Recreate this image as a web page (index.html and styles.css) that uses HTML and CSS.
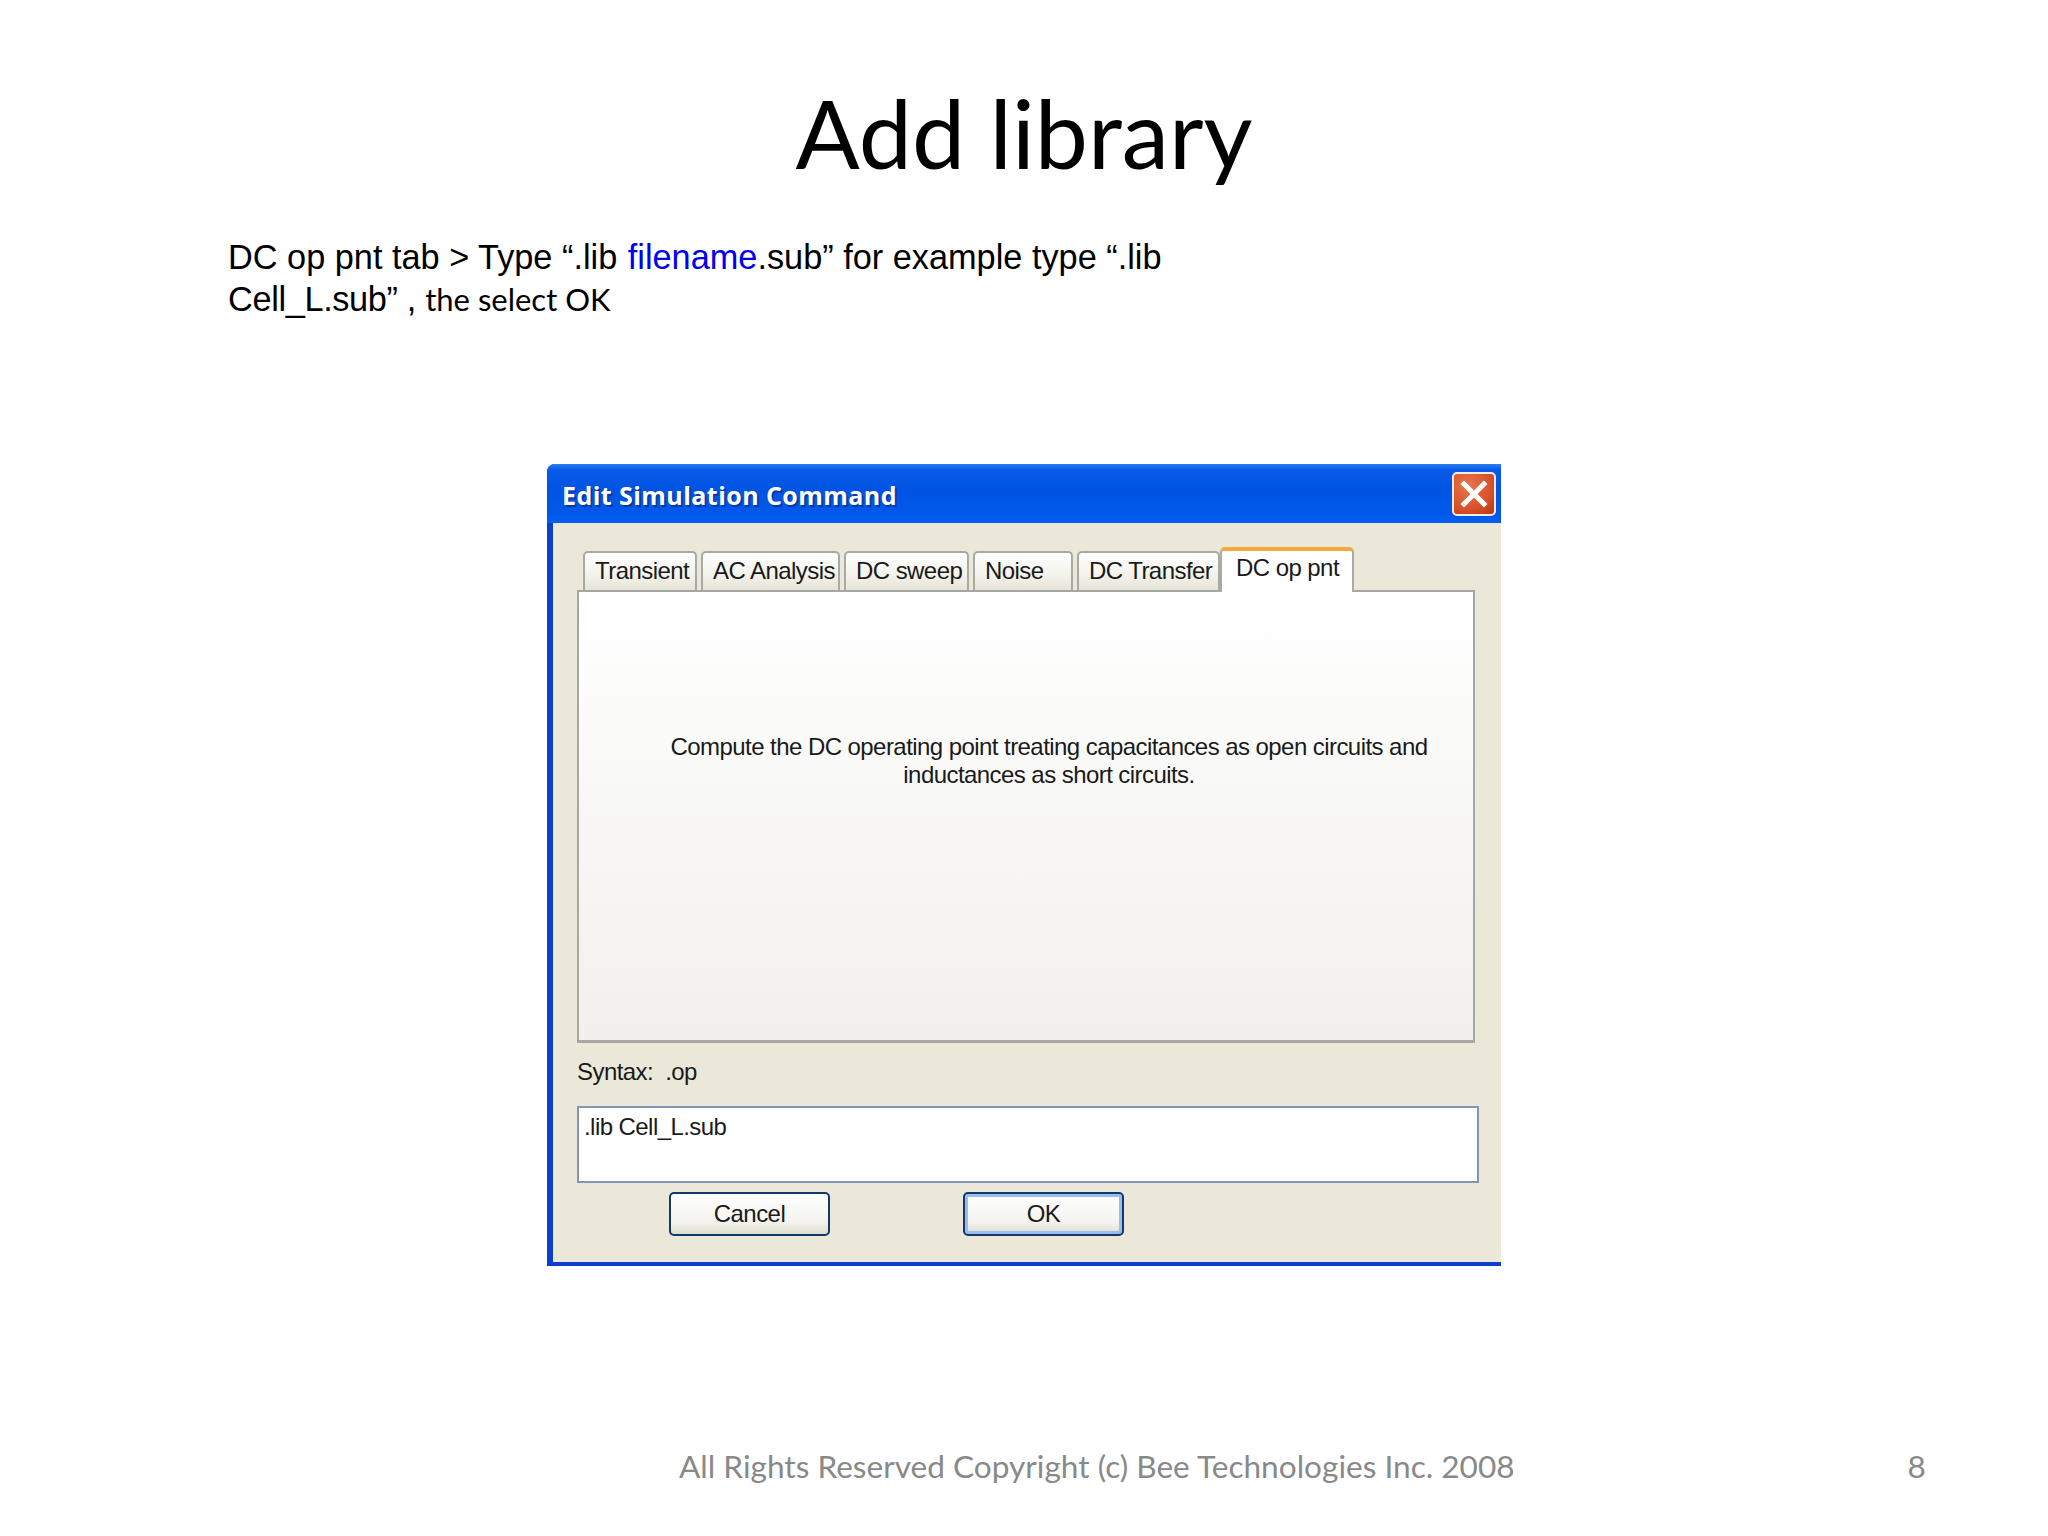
FILE: index.html
```html
<!DOCTYPE html>
<html lang="en">
<head>
<meta charset="utf-8">
<title>Add library</title>
<link rel="stylesheet" href="styles.css">
</head>
<body>
<main class="slide">
  <h1 class="title">Add library</h1>
  <p class="desc">DC op pnt tab &gt; Type “.lib <span class="blue">filename</span>.sub” for example type “.lib<br><span class="tight">Cell_L.sub” , </span><span class="calibri">the select OK</span></p>
  <section class="dialog">
    <header class="titlebar">
      <span class="titletext">Edit Simulation Command</span>
      <span class="close"><svg viewBox="0 0 44 44" width="44" height="44"><path d="M12 12 L32 32 M32 12 L12 32" stroke="#fff" stroke-width="5" stroke-linecap="square" fill="none"/></svg></span>
    </header>
    <div class="client">
      <div class="tabs">
        <span class="tab t1">Transient</span>
        <span class="tab t2">AC Analysis</span>
        <span class="tab t3">DC sweep</span>
        <span class="tab t4">Noise</span>
        <span class="tab t5">DC Transfer</span>
        <span class="tab active">DC op pnt</span>
      </div>
      <div class="panel">
        <p class="paneltext">Compute the DC operating point treating capacitances as open circuits and<br>inductances as short circuits.</p>
      </div>
      <div class="syntax"><span>Syntax:</span><span>.op</span></div>
      <div class="input">.lib Cell_L.sub</div>
      <div class="buttons">
        <span class="btn">Cancel</span>
        <span class="btn default">OK</span>
      </div>
    </div>
  </section>
  <footer class="footer">
    <span class="copy">All Rights Reserved Copyright (c) Bee Technologies Inc. 2008</span>
    <span class="num">8</span>
  </footer>
</main>
</body>
</html>
```
FILE: styles.css
```css
* { box-sizing: border-box; }
html, body { margin: 0; padding: 0; background: #fff; }
.slide {
  width: 2048px;
  height: 1536px;
  display: flex;
  flex-direction: column;
  overflow: hidden;
}
.title {
  margin: 78px 0 0;
  height: 108px;
  font: 400 95px/108px Lato, sans-serif;
  text-align: center;
  color: #000;
}
.desc {
  margin: 51px 0 0 228px;
  height: 83px;
  font: 400 34.3px/41.5px "Liberation Sans", sans-serif;
  color: #000;
}
.blue { color: #0000f0; margin-left: 1px; }
.tight { letter-spacing: -0.35px; }
.calibri { font-family: Lato, sans-serif; font-size: 31px; }
.dialog {
  margin: 144px 0 0 547px;
  width: 954px;
  height: 802px;
  display: flex;
  flex-direction: column;
  background: #0a3fd0;
  border-radius: 8px 0 0 0;
}
.titlebar {
  height: 59px;
  flex: none;
  display: flex;
  align-items: center;
  justify-content: space-between;
  padding: 3px 5px 0 15px;
  border-radius: 8px 0 0 0;
  background: linear-gradient(#2a80f0 0, #0a5ae8 10%, #0054e3 45%, #0058ea 85%, #0060f2 100%);
}
.titletext {
  font: 700 25px "Open Sans", sans-serif;
  letter-spacing: 0.45px;
  color: #fff;
  text-shadow: 2px 2px 0 #0a3aa0;
  white-space: nowrap;
}
.close {
  width: 44px;
  height: 44px;
  margin-top: -3px;
  border: 2px solid #f4ece4;
  border-radius: 5px;
  background: radial-gradient(circle at 35% 30%, #e8764e, #d8522a 60%, #b83410);
  display: flex;
  align-items: center;
  justify-content: center;
}
.close svg { flex: none; }
.client {
  flex: 1;
  margin: 0 0 4px 6px;
  padding: 0 22px 0 24px;
  background: #ebe8d9;
  display: flex;
  flex-direction: column;
  font: 400 24px "Liberation Sans", sans-serif;
  letter-spacing: -0.56px;
  color: #1a1a1a;
}
.tabs {
  margin-top: 23px;
  padding-left: 6px;
  height: 44px;
  flex: none;
  display: flex;
  align-items: flex-end;
  gap: 4px;
  position: relative;
  z-index: 1;
}
.tab {
  height: 39px;
  padding: 2px 0 0 10px;
  border: 2px solid #a9aaa6;
  border-bottom: 0;
  border-radius: 5px 5px 0 0;
  background: linear-gradient(#fff, #f3f2ea 60%, #e6e4d8);
  line-height: 32px;
  white-space: nowrap;
}
.t1 { width: 114px; }
.t2 { width: 139px; }
.t3 { width: 125px; }
.t4 { width: 100px; }
.t5 { width: 143px; margin-right: -4px; }
.tab.active {
  width: 134px;
  height: 45px;
  margin-bottom: -2px;
  padding: 1px 0 0 14px;
  border: 2px solid #a9aaa6;
  border-top: 4px solid #f4a93a;
  border-bottom: 0;
  background: #fff;
}
.panel {
  width: 898px;
  height: 453px;
  flex: none;
  border: 2px solid #a6a6a2;
  border-bottom-width: 3px;
  background: linear-gradient(#fff, #f1f0ec);
  padding: 141px 0 0 64px;
}
.paneltext {
  margin: 0;
  width: 812px;
  line-height: 27.5px;
  text-align: center;
  white-space: nowrap;
}
.syntax {
  margin-top: 15px;
  height: 28px;
  line-height: 28px;
  flex: none;
  display: flex;
  gap: 12px;
}
.input {
  margin-top: 20px;
  width: 902px;
  height: 77px;
  flex: none;
  border: 2px solid #8198b4;
  background: #fff;
  padding: 3px 5px;
  line-height: 32px;
}
.buttons {
  margin: 9px 0 0 92px;
  display: flex;
  gap: 133px;
}
.btn {
  width: 161px;
  height: 44px;
  display: flex;
  align-items: center;
  justify-content: center;
  border: 2px solid #0f3a6c;
  border-radius: 5px;
  background: linear-gradient(#fff, #f4f3ee 70%, #dedcd0);
}
.btn.default {
  box-shadow: inset 0 0 0 3px #9dbbec;
}
.footer {
  margin-top: 180px;
  height: 40px;
  display: flex;
  align-items: center;
  font: 400 31.6px Lato, sans-serif;
  color: #898989;
}
.copy { margin-left: 679px; }
.num { margin-left: 393px; }
```
